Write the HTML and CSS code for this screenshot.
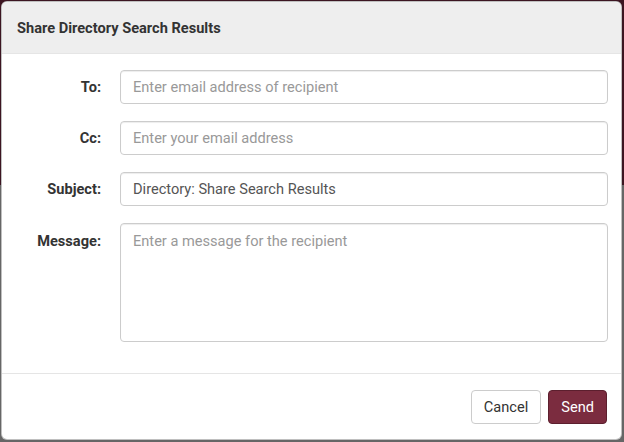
FILE: index.html
```html
<!DOCTYPE html>
<html lang="en">
<head>
<meta charset="utf-8">
<title>Share Directory Search Results</title>
<link rel="stylesheet" href="styles.css">
</head>
<body>
<div class="backdrop">
  <div class="modal">
    <div class="modal-header">
      <h4 class="modal-title">Share Directory Search Results</h4>
    </div>
    <form class="modal-body">
      <label class="label" for="to">To:</label>
      <input class="field" id="to" type="text" placeholder="Enter email address of recipient">
      <label class="label" for="cc">Cc:</label>
      <input class="field" id="cc" type="text" placeholder="Enter your email address">
      <label class="label" for="subject">Subject:</label>
      <input class="field" id="subject" type="text" value="Directory: Share Search Results">
      <label class="label label-top" for="message">Message:</label>
      <textarea class="field area" id="message" placeholder="Enter a message for the recipient"></textarea>
    </form>
    <div class="modal-footer">
      <button class="btn btn-default" type="button">Cancel</button>
      <button class="btn btn-primary" type="button">Send</button>
    </div>
  </div>
</div>
</body>
</html>
```

FILE: styles.css
```css
html, body {
  margin: 0;
  padding: 0;
}
body {
  width: 624px;
  height: 442px;
  overflow: hidden;
  font-family: Roboto, "Liberation Sans", Arial, sans-serif;
  font-size: 14.6px;
  color: #333;
  background: linear-gradient(to bottom, #3c1521 0, #3c1521 185px, #666 185px, #666 100%);
}
.backdrop {
  padding: 1px 0 0 1px;
}
.modal {
  width: 621px;
  height: 439px;
  box-sizing: border-box;
  background: #fff;
  border: 1px solid rgba(0, 0, 0, 0.25);
  border-radius: 6px;
  overflow: hidden;
  display: flex;
  flex-direction: column;
}
.modal-header {
  height: 51px;
  background: #eee;
  border-bottom: 1px solid #e5e5e5;
  display: flex;
  align-items: center;
  padding: 0 16px 0 15px;
}
.modal-title {
  margin: 0;
  font-size: 14.6px;
  font-weight: 700;
  color: #333;
}
.modal-body {
  margin: 0;
  padding: 16px 13px 31px 0;
  display: grid;
  grid-template-columns: 99px 1fr;
  column-gap: 19px;
  row-gap: 17px;
  align-items: center;
}
.label {
  text-align: right;
  font-weight: 700;
  color: #333;
}
.label-top {
  align-self: start;
  padding-top: 9px;
}
.field {
  display: block;
  box-sizing: border-box;
  width: 100%;
  height: 34px;
  margin: 0;
  padding: 6px 12px;
  border: 1px solid #ccc;
  border-radius: 4px;
  font-family: inherit;
  font-size: 14.6px;
  color: #555;
  background: #fff;
  box-shadow: inset 0 1px 1px rgba(0, 0, 0, 0.075);
}
.field::placeholder {
  color: #999;
}
.area {
  height: 119px;
  resize: none;
  padding-top: 8px;
}
.modal-footer {
  border-top: 1px solid #e5e5e5;
  padding: 16px 14px 0 0;
  display: flex;
  justify-content: flex-end;
  gap: 7px;
}
.btn {
  height: 34px;
  box-sizing: border-box;
  padding: 6px 12px;
  border-radius: 4px;
  font-family: inherit;
  font-size: 14.6px;
  border: 1px solid #ccc;
}
.btn-default {
  background: #fff;
  color: #333;
}
.btn-primary {
  background: #7b2c3f;
  border-color: #5c1f2e;
  color: #fff;
}
```
